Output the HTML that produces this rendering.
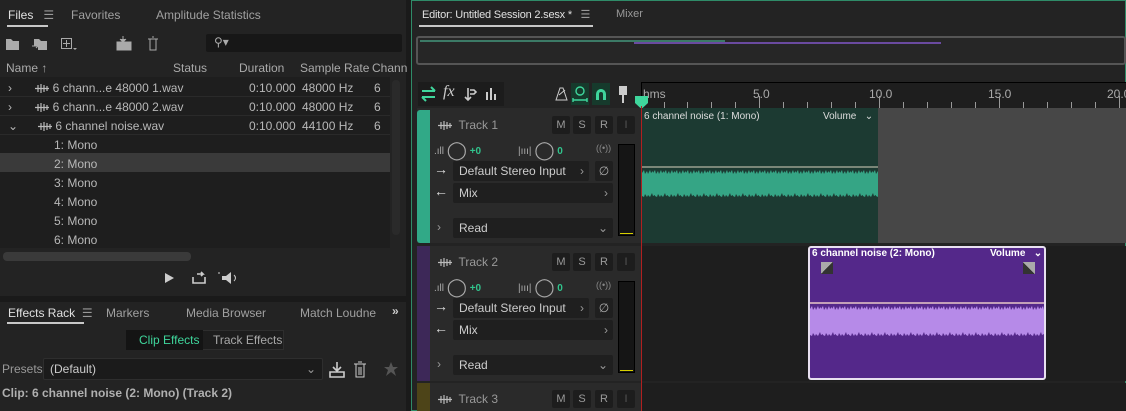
<!DOCTYPE html>
<html><head><meta charset="utf-8"><style>
*{margin:0;padding:0;box-sizing:border-box}
body{width:1126px;height:411px;overflow:hidden;background:#1a1a1a;font-family:"Liberation Sans",sans-serif;font-size:12px;color:#b8b8b8;position:relative}
.a{position:absolute}
.t{position:absolute;white-space:nowrap}
.btn{position:absolute;background:#1d1d1d;border-radius:2px;color:#9a9a9a;font-size:11px;text-align:center;line-height:18px;width:18px;height:18px}
.fld{position:absolute;background:#1f1f1f;border-radius:2px;color:#ccc;font-size:12px;line-height:20px;padding-left:6px;height:20px}
.g{color:#31c48d;font-weight:bold}
.wv{display:inline-block;width:14px;height:9px;vertical-align:-1px}
</style></head><body>
<svg width="0" height="0" style="position:absolute"><defs>
<symbol id="wv" viewBox="0 0 14 9"><path d="M0 4.5h14M3 1v7M6 0v9M9 1v7M12 2v5" stroke="#bbb" stroke-width="1.2" fill="none"/></symbol>
<pattern id="topT" x="0" y="4" width="11" height="8" patternUnits="userSpaceOnUse"><path d="M0 0h11v3l-2 2-1-3-2 4-1-3-2 3-1-4-2 3z" fill="#1c3a32"/></pattern>
<pattern id="botT" x="0" y="28" width="13" height="8" patternUnits="userSpaceOnUse"><path d="M0 8h13v-5l-2 1-1-3-2 4-2-2-1 2-2-3-1 3-2-1z" fill="#1c3a32"/></pattern>
<pattern id="topP" x="0" y="2" width="11" height="8" patternUnits="userSpaceOnUse"><path d="M0 0h11v3l-2 2-1-3-2 4-1-3-2 3-1-4-2 3z" fill="#54288a"/></pattern>
<pattern id="botP" x="0" y="29" width="13" height="8" patternUnits="userSpaceOnUse"><path d="M0 8h13v-5l-2 1-1-3-2 4-2-2-1 2-2-3-1 3-2-1z" fill="#54288a"/></pattern>
</defs></svg>
<!-- LEFT PANEL -->
<div class="a" style="left:0;top:0;width:406px;height:296px;background:#232323"></div>
<div class="t" style="left:8px;top:8px;color:#e0e0e0">Files&nbsp;&nbsp; <span style="color:#999">☰</span></div>
<div class="a" style="left:7px;top:25px;width:41px;height:2px;background:#c8c8c8"></div>
<div class="t" style="left:71px;top:8px;color:#a0a0a0">Favorites</div>
<div class="t" style="left:156px;top:8px;color:#a0a0a0">Amplitude Statistics</div>
<svg class="a" style="left:5px;top:35px" width="160" height="18"><g fill="#aaa"><path d="M1 4h5l2 2h6v9H1z"/><path d="M29 4h5l2 2h6v9H33v-4h-4z"/><path d="M27 11h6l-2-2M33 11l-2 2" stroke="#aaa" fill="none"/></g><rect x="56.5" y="3.5" width="10" height="10" fill="none" stroke="#aaa"/><path d="M61.5 5v7M58 8.5h7" stroke="#aaa"/><path d="M68 13l2 2 2-2z" fill="#aaa"/><path d="M112 7h14v8h-14zM118 1v6M115 4l3 3 3-3" fill="#aaa" stroke="#aaa"/><path d="M143 4h10M145 4v11h6V4M147 2h2" stroke="#aaa" fill="none"/></svg>
<div class="a" style="left:206px;top:34px;width:196px;height:18px;background:#171717;border-radius:2px"></div>
<div class="t" style="left:214px;top:35px;color:#aaa">⚲▾</div>
<div class="t" style="left:6px;top:61px;color:#aaa">Name ↑</div>
<div class="t" style="left:173px;top:61px;color:#aaa">Status</div>
<div class="t" style="left:239px;top:61px;color:#aaa">Duration</div>
<div class="t" style="left:300px;top:61px;color:#aaa">Sample Rate</div>
<div class="t" style="left:372px;top:61px;color:#aaa">Chann</div>
<div class="a" style="left:0;top:77px;width:390px;height:171px;background:#1e1e1e"></div>
<div class="a" style="left:0;top:153px;width:390px;height:19px;background:#3a3a3a"></div>
<div class="a" style="left:392px;top:80px;width:8px;height:155px;background:#2a2a2a;border-radius:4px"></div>
<div class="t" style="left:8px;top:79px;line-height:19px;color:#b8b8b8">
›&nbsp;&nbsp;&nbsp;&nbsp;&nbsp;&nbsp; <svg class="wv"><use href="#wv"/></svg> 6 chann...e 48000 1.wav<br>›&nbsp;&nbsp;&nbsp;&nbsp;&nbsp;&nbsp; <svg class="wv"><use href="#wv"/></svg> 6 chann...e 48000 2.wav<br>⌄&nbsp;&nbsp;&nbsp;&nbsp;&nbsp; <svg class="wv"><use href="#wv"/></svg> 6 channel noise.wav</div>
<div class="t" style="left:249px;top:79px;line-height:19px">0:10.000<br>0:10.000<br>0:10.000</div>
<div class="t" style="left:302px;top:79px;line-height:19px">48000 Hz<br>48000 Hz<br>44100 Hz</div>
<div class="t" style="left:374px;top:79px;line-height:19px">6<br>6<br>6</div>
<div class="t" style="left:54px;top:136px;line-height:19px">1: Mono<br>2: Mono<br>3: Mono<br>4: Mono<br>5: Mono<br>6: Mono</div>
<div class="a" style="left:0;top:96px;width:390px;height:1px;background:#2a2a2a"></div>
<div class="a" style="left:0;top:115px;width:390px;height:1px;background:#2a2a2a"></div>
<div class="a" style="left:0;top:134px;width:390px;height:1px;background:#2a2a2a"></div>
<div class="a" style="left:3px;top:252px;width:188px;height:9px;background:#3a3a3a;border-radius:4px"></div>
<svg class="a" style="left:160px;top:270px" width="85" height="16"><path d="M5 3l9 5-9 5z" fill="#ccc"/><path d="M33 7v6h12V7M37 4h6l-2-2M43 4l-2 2" stroke="#ccc" stroke-width="1.6" fill="none"/><path d="M62 6h4l5-4v12l-5-4h-4z" fill="#ccc"/><path d="M74 5q3 3 0 6" stroke="#ccc" fill="none"/><path d="M59 2v2" stroke="#ccc"/></svg>
<div class="a" style="left:0;top:296px;width:406px;height:6px;background:#1a1a1a"></div>
<div class="a" style="left:0;top:302px;width:406px;height:109px;background:#232323"></div>
<div class="t" style="left:8px;top:306px;color:#e0e0e0">Effects Rack&nbsp; <span style="color:#999">☰</span></div>
<div class="a" style="left:7px;top:322px;width:77px;height:2px;background:#c8c8c8"></div>
<div class="t" style="left:106px;top:306px;color:#a0a0a0">Markers</div>
<div class="t" style="left:186px;top:306px;color:#a0a0a0">Media Browser</div>
<div class="t" style="left:300px;top:306px;color:#a0a0a0">Match Loudne</div>
<div class="t" style="left:392px;top:304px;color:#ccc;font-weight:bold">»</div>
<div class="a" style="left:126px;top:330px;width:158px;height:20px;background:#1d1d1d;border:1px solid #2e2e2e"></div>
<div class="a" style="left:126px;top:330px;width:77px;height:20px;background:#141414"></div>
<div class="t" style="left:139px;top:333px;color:#3fd69c">Clip Effects</div>
<div class="t" style="left:213px;top:333px;color:#a8a8a8">Track Effects</div>
<div class="t" style="left:2px;top:362px;color:#999">Presets:</div>
<div class="fld" style="left:43px;top:358px;width:280px;height:22px;line-height:20px;background:#1b1b1b;border:1px solid #2e2e2e">(Default)<span style="position:absolute;right:6px;color:#999">⌄</span></div>
<svg class="a" style="left:328px;top:360px" width="70" height="18"><path d="M2 12h14v5H2zM9 2v8M5 7l4 4 4-4" stroke="#ccc" stroke-width="1.6" fill="none"/><path d="M26 4h12M28 4v13h8V4M30 2h4M31 7v8M33 7v8" stroke="#ccc" fill="none"/><path d="M63 2l2 5h5l-4 3 2 6-5-4-5 4 2-6-4-3h5z" fill="#555"/></svg>
<div class="t" style="left:2px;top:386px;color:#b0b0b0;font-weight:bold">Clip: 6 channel noise (2: Mono) (Track 2)</div>

<!-- EDITOR -->
<div class="a" style="left:411px;top:0;width:715px;height:411px;background:#232323;border:1px solid #2f8b68"></div>
<div class="t" style="left:422px;top:8px;color:#e0e0e0;font-size:11px;letter-spacing:-0.2px">Editor: Untitled Session 2.sesx *&nbsp;&nbsp; <span style="color:#999">☰</span></div>
<div class="a" style="left:419px;top:25px;width:174px;height:2px;background:#c8c8c8"></div>
<div class="t" style="left:616px;top:8px;color:#999;font-size:11px">Mixer</div>
<div class="a" style="left:416px;top:36px;width:710px;height:29px;border:2px solid #555;border-radius:3px;background:#262626"></div>
<div class="a" style="left:420px;top:40px;width:305px;height:2px;background:#3c7a66"></div>
<div class="a" style="left:634px;top:42px;width:307px;height:2px;background:#6a4aa0"></div>
<!-- toolbar -->
<div class="a" style="left:418px;top:82px;width:86px;height:24px;background:#1c1c1c"></div>
<svg class="a" style="left:420px;top:85px" width="88" height="18"><path d="M2 6h13M11 2l4 4M15 12H2M6 16l-4-4" stroke="#3fd69c" stroke-width="2" fill="none"/><path d="M48 3v12M45 12l3 3 3-3M50 5h4l2 2-2 2h-4" stroke="#ccc" stroke-width="1.6" fill="none"/><path d="M66 7h2v8h-2zM70 3h2v12h-2zM74 9h2v6h-2z" fill="#ccc"/></svg>
<div class="t" style="left:443px;top:83px;font-size:16px;color:#ccc;font-style:italic;font-family:'Liberation Serif',serif">fx</div>
<svg class="a" style="left:553px;top:85px" width="80" height="20"><path d="M3 15l4-12h3l4 12zM6 10l6-5" stroke="#ccc" fill="none"/></svg>
<div class="a" style="left:571px;top:83px;width:18px;height:22px;background:#163a2c"></div>
<svg class="a" style="left:571px;top:85px" width="18" height="18"><circle cx="9" cy="6" r="4" stroke="#3fd69c" fill="none" stroke-width="1.4"/><path d="M2 15h14M2 13v4M16 13v4" stroke="#3fd69c" stroke-width="1.4"/></svg>
<div class="a" style="left:592px;top:83px;width:18px;height:22px;background:#163a2c"></div>
<svg class="a" style="left:592px;top:85px" width="18" height="18"><path d="M4 15V9a5 5 0 0 1 10 0v6h-3V9a2 2 0 0 0-4 0v6z" fill="#3fd69c"/></svg>
<svg class="a" style="left:617px;top:86px" width="12" height="18"><path d="M3 1h6v7H3zM6 8v9" stroke="#ccc" stroke-width="2" fill="#ccc"/></svg>
<!-- ruler -->
<div class="a" style="left:641px;top:82px;width:485px;height:26px;background:#1e1e1e;border-top:1px solid #000;border-left:1px solid #000"></div>
<div class="t" style="left:643px;top:87px;color:#aaa">hms</div>
<div class="t" style="left:753px;top:87px;color:#aaa">5.0</div>
<div class="t" style="left:869px;top:87px;color:#aaa">10.0</div>
<div class="t" style="left:988px;top:87px;color:#aaa">15.0</div>
<div class="t" style="left:1107px;top:87px;color:#aaa">20.0</div>
<svg class="a" style="left:641px;top:96px" width="485" height="12"><g stroke="#999"><path d="M23.5 6v6M46.5 6v6M70.5 6v6M94.5 6v6M118.5 0v12M142.5 6v6M166.5 6v6M190.5 6v6M214.5 6v6M238.5 0v12M262.5 6v6M286.5 6v6M310.5 6v6M334.5 6v6M358.5 0v12M382.5 6v6M406.5 6v6M430.5 6v6M454.5 6v6M478.5 0v12"/></g></svg>
<svg class="a" style="left:634px;top:94px" width="16" height="16"><path d="M1 2h13v7l-6.5 6L1 9z" fill="#3fd69c"/></svg>

<!-- TRACK 1 -->
<div class="a" style="left:417px;top:108px;width:224px;height:135px;background:#2a2a2a"></div>
<div class="a" style="left:417px;top:110px;width:13px;height:133px;background:#31a987;border-radius:3px 0 0 3px"></div>
<div class="a" style="left:641px;top:108px;width:237px;height:135px;background:#1c3a32"></div>
<div class="a" style="left:878px;top:108px;width:248px;height:135px;background:#474747"></div>
<svg class="a" style="left:642px;top:164px" width="236" height="40"><rect x="0" y="4" width="236" height="32" fill="#35a585"/><rect x="0" y="4" width="236" height="8" fill="url(#topT)"/><rect x="0" y="28" width="236" height="8" fill="url(#botT)"/><path d="M0 3h236" stroke="#9aa090" stroke-width="1.5"/></svg>
<div class="t" style="left:644px;top:111px;color:#ddd;font-size:10px">6 channel noise (1: Mono)</div>
<div class="t" style="left:823px;top:111px;color:#ddd;font-size:10px">Volume&nbsp;&nbsp; ⌄</div>

<!-- TRACK 2 -->
<div class="a" style="left:417px;top:246px;width:224px;height:135px;background:#2a2a2a"></div>
<div class="a" style="left:417px;top:246px;width:13px;height:135px;background:#3d2858"></div>
<div class="a" style="left:641px;top:246px;width:485px;height:135px;background:#1e1e1e"></div>
<div class="a" style="left:808px;top:246px;width:238px;height:134px;background:#54288a;border:2px solid #e8e0f0;border-radius:3px"></div>
<svg class="a" style="left:810px;top:302px" width="234" height="40"><rect x="0" y="2" width="234" height="35" fill="#b68ae8"/><rect x="0" y="2" width="234" height="8" fill="url(#topP)"/><rect x="0" y="29" width="234" height="8" fill="url(#botP)"/><path d="M0 1h234" stroke="#e8c8c8" stroke-width="1.5"/></svg>
<div class="t" style="left:812px;top:248px;color:#fff;font-size:10px;font-weight:bold">6 channel noise (2: Mono)</div>
<div class="t" style="left:990px;top:248px;color:#fff;font-size:10px;font-weight:bold">Volume&nbsp;&nbsp; ⌄</div>
<div class="a" style="left:821px;top:262px;width:12px;height:12px;background:linear-gradient(135deg,#aaa 50%,#333 50%)"></div>
<div class="a" style="left:1023px;top:262px;width:12px;height:12px;background:linear-gradient(45deg,#333 50%,#aaa 50%)"></div>

<!-- TRACK 3 -->
<div class="a" style="left:417px;top:383px;width:224px;height:28px;background:#2a2a2a"></div>
<div class="a" style="left:417px;top:383px;width:13px;height:28px;background:#4d4418"></div>
<div class="a" style="left:641px;top:383px;width:485px;height:28px;background:#1e1e1e"></div>

<!-- track header contents -->
<div class="t" style="left:438px;top:118px;color:#999;font-size:12px"><svg class="wv"><use href="#wv"/></svg>&nbsp; Track 1</div>
<div class="t" style="left:438px;top:255px;color:#999;font-size:12px"><svg class="wv"><use href="#wv"/></svg>&nbsp; Track 2</div>
<div class="t" style="left:438px;top:392px;color:#999;font-size:12px"><svg class="wv"><use href="#wv"/></svg>&nbsp; Track 3</div>
<div class="btn" style="left:552px;top:116px">M</div><div class="btn" style="left:573px;top:116px">S</div><div class="btn" style="left:595px;top:116px">R</div><div class="btn" style="left:617px;top:116px;color:#555">I</div>
<div class="btn" style="left:552px;top:253px">M</div><div class="btn" style="left:573px;top:253px">S</div><div class="btn" style="left:595px;top:253px">R</div><div class="btn" style="left:617px;top:253px;color:#555">I</div>
<div class="btn" style="left:552px;top:390px">M</div><div class="btn" style="left:573px;top:390px">S</div><div class="btn" style="left:595px;top:390px">R</div><div class="btn" style="left:617px;top:390px;color:#555">I</div>

<div class="t" style="left:434px;top:140px;color:#aaa;font-size:10px">.ıll <span style="font-size:18px;vertical-align:-2px">◯</span> <span class="g">+0</span></div>
<div class="t" style="left:518px;top:140px;color:#aaa;font-size:10px">|ııı| <span style="font-size:18px;vertical-align:-2px">◯</span> <span class="g">0</span></div>
<div class="t" style="left:596px;top:143px;color:#888;font-size:9px">((•))</div>
<div class="t" style="left:434px;top:277px;color:#aaa;font-size:10px">.ıll <span style="font-size:18px;vertical-align:-2px">◯</span> <span class="g">+0</span></div>
<div class="t" style="left:518px;top:277px;color:#aaa;font-size:10px">|ııı| <span style="font-size:18px;vertical-align:-2px">◯</span> <span class="g">0</span></div>
<div class="t" style="left:596px;top:280px;color:#888;font-size:9px">((•))</div>

<div class="t" style="left:434px;top:161px;color:#ddd;font-size:14px">→</div>
<div class="fld" style="left:453px;top:161px;width:136px">Default Stereo Input<span style="position:absolute;right:5px;color:#999">›</span></div>
<div class="fld" style="left:595px;top:161px;width:18px;padding:0;text-align:center;color:#aaa">∅</div>
<div class="t" style="left:434px;top:183px;color:#ddd;font-size:14px">←</div>
<div class="fld" style="left:453px;top:183px;width:160px">Mix<span style="position:absolute;right:5px;color:#999">›</span></div>
<div class="t" style="left:437px;top:220px;color:#999">›</div>
<div class="fld" style="left:453px;top:218px;width:160px">Read<span style="position:absolute;right:5px;color:#999">⌄</span></div>
<div class="a" style="left:618px;top:144px;width:17px;height:92px;background:#151515;border:1px solid #000"></div>
<div class="a" style="left:620px;top:233px;width:13px;height:1px;background:#d8d000"></div>

<div class="t" style="left:434px;top:298px;color:#ddd;font-size:14px">→</div>
<div class="fld" style="left:453px;top:298px;width:136px">Default Stereo Input<span style="position:absolute;right:5px;color:#999">›</span></div>
<div class="fld" style="left:595px;top:298px;width:18px;padding:0;text-align:center;color:#aaa">∅</div>
<div class="t" style="left:434px;top:320px;color:#ddd;font-size:14px">←</div>
<div class="fld" style="left:453px;top:320px;width:160px">Mix<span style="position:absolute;right:5px;color:#999">›</span></div>
<div class="t" style="left:437px;top:357px;color:#999">›</div>
<div class="fld" style="left:453px;top:355px;width:160px">Read<span style="position:absolute;right:5px;color:#999">⌄</span></div>
<div class="a" style="left:618px;top:281px;width:17px;height:92px;background:#151515;border:1px solid #000"></div>
<div class="a" style="left:620px;top:370px;width:13px;height:1px;background:#d8d000"></div>

<!-- playhead -->
<div class="a" style="left:641px;top:106px;width:1px;height:305px;background:#b02020"></div>
</body></html>
